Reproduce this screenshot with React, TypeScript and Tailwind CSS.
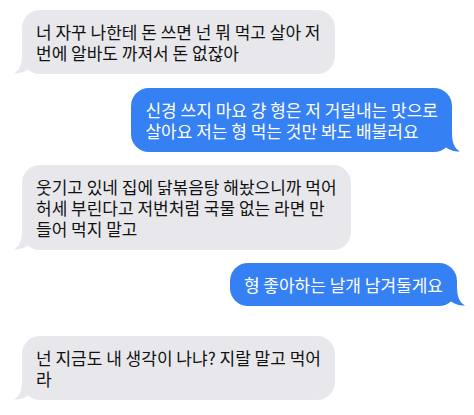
const FONT = "font-['Noto_Sans_CJK_KR',sans-serif]";

function Tail({ side, color }: { side: "left" | "right"; color: string }) {
  const isLeft = side === "left";
  return (
    <svg
      width="22"
      height="22"
      viewBox="0 0 22 22"
      className={`absolute bottom-0 ${isLeft ? "-left-[8px]" : "-right-[8px] -scale-x-100"}`}
    >
      <path d="M8 2 C8 12 6 18 0 21.5 C7 21.5 12 19.5 16 16 L22 16 L22 2 Z" fill={color} />
    </svg>
  );
}

function Bubble({
  lines,
  mine,
  className,
}: {
  lines: string[];
  mine?: boolean;
  className?: string;
}) {
  const color = mine ? "#3580f3" : "#e8e8ec";
  return (
    <div
      className={`relative rounded-[18px] px-[14px] py-[11px] text-[17px] leading-[21px] ${
        mine ? "bg-[#3580f3] text-white self-end" : "bg-[#e8e8ec] text-[#111] self-start"
      } ${className ?? ""}`}
    >
      <Tail side={mine ? "right" : "left"} color={color} />
      <div className="relative whitespace-nowrap">
        {lines.map((l, i) => (
          <div key={i}>{l}</div>
        ))}
      </div>
    </div>
  );
}

export default function App() {
  return (
    <div className={`w-[474px] h-[415px] bg-white overflow-hidden flex flex-col pt-[10px] ${FONT}`}>
      <Bubble
        className="ml-[22px]"
        lines={["너 자꾸 나한테 돈 쓰면 넌 뭐 먹고 살아 저", "번에 알바도 까져서 돈 없잖아"]}
      />
      <Bubble
        mine
        className="mr-[22px] mt-[14px]"
        lines={["신경 쓰지 마요 걍 형은 저 거덜내는 맛으로", "살아요 저는 형 먹는 것만 봐도 배불러요"]}
      />
      <Bubble
        className="ml-[22px] mt-[13px]"
        lines={[
          "웃기고 있네 집에 닭볶음탕 해놨으니까 먹어",
          "허세 부린다고 저번처럼 국물 없는 라면 만",
          "들어 먹지 말고",
        ]}
      />
      <Bubble mine className="mr-[17px] mt-[13px]" lines={["형 좋아하는 날개 남겨둘게요"]} />
      <Bubble
        className="ml-[22px] mt-[30px]"
        lines={["넌 지금도 내 생각이 나냐? 지랄 말고 먹어", "라"]}
      />
    </div>
  );
}
